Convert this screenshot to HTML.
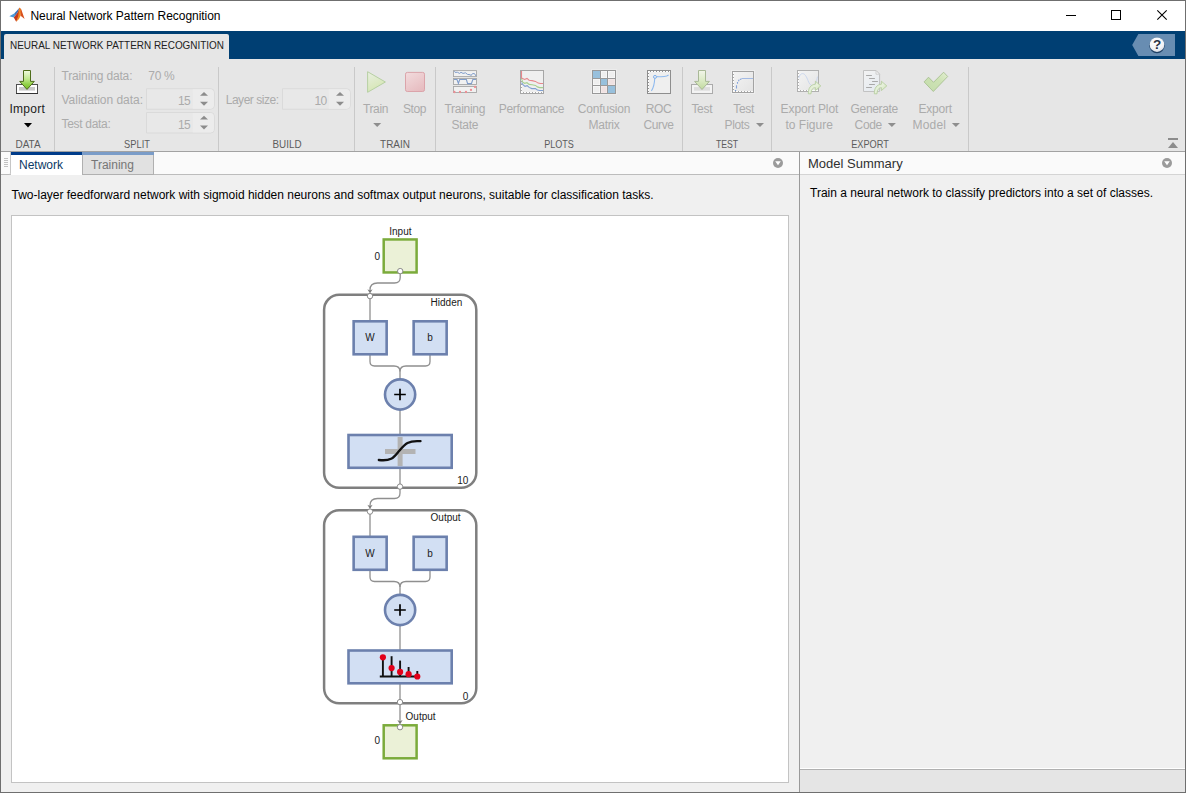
<!DOCTYPE html>
<html>
<head>
<meta charset="utf-8">
<title>Neural Network Pattern Recognition</title>
<style>
html,body{margin:0;padding:0;}
body{width:1186px;height:793px;position:relative;overflow:hidden;background:#f0f0f0;font-family:"Liberation Sans",sans-serif;font-size:12px;color:#000;}
.abs{position:absolute;}
.t{position:absolute;white-space:nowrap;line-height:1;}
.c{position:absolute;white-space:nowrap;line-height:1;transform:translateX(-50%);text-align:center;}
.dis{color:#ababab;}
.sec{color:#5c5c5c;font-size:11px;}
.sep{position:absolute;width:1px;background:#c9c9c9;top:67px;height:84px;}
.spin{position:absolute;height:20px;border:1px solid #dadada;border-radius:4px;background:#e9e9e9;box-sizing:border-box;}
.spin .btn{position:absolute;right:0;top:0;bottom:0;width:20px;background:#e6e6e6;border-radius:0 3px 3px 0;}
</style>
</head>
<body>
<!-- title bar -->
<div class="abs" style="left:0;top:0;width:1186px;height:31px;background:#fff;"></div>
<!-- blue strip -->
<div class="abs" style="left:0;top:31px;width:1186px;height:28px;background:#003f73;"></div>
<!-- toolstrip bg -->
<div class="abs" style="left:0;top:59px;width:1186px;height:92px;background:#e6e6e6;"></div>
<div class="abs" style="left:0;top:151px;width:1186px;height:1px;background:#a2a2a2;"></div>
<!-- toolstrip tab -->
<div class="abs" style="left:4px;top:34px;width:225px;height:25px;background:#e6e6e6;border-radius:2px 2px 0 0;"></div>

<!-- TITLE -->
<div id="title" class="t" style="left:30.4px;top:9.6px;font-size:12px;letter-spacing:-0.04px;color:#000;">Neural Network Pattern Recognition</div>
<div id="tabtxt" class="t" style="left:9.6px;top:39.7px;font-size:11px;transform-origin:0 50%;transform:scaleX(0.9033);color:#222;">NEURAL NETWORK PATTERN RECOGNITION</div>


<!-- ===== TOOLSTRIP CONTENT ===== -->
<svg class="abs" style="left:0;top:0;" width="1186" height="152" viewBox="0 0 1186 152">
<defs>
<linearGradient id="gArrow" x1="0" y1="0" x2="0" y2="1"><stop offset="0" stop-color="#f1fbe2"/><stop offset="0.45" stop-color="#c0e88e"/><stop offset="0.75" stop-color="#8fd043"/><stop offset="1" stop-color="#74bb2a"/></linearGradient>
<linearGradient id="gArrowD" x1="0" y1="0" x2="0" y2="1"><stop offset="0" stop-color="#f2f5ea"/><stop offset="0.5" stop-color="#dcebc6"/><stop offset="1" stop-color="#c0d99e"/></linearGradient>
<linearGradient id="gPlot" x1="0" y1="0" x2="1" y2="1"><stop offset="0" stop-color="#f4f4f4"/><stop offset="1" stop-color="#e3e3e3"/></linearGradient>
<radialGradient id="gHelp" cx="0.45" cy="0.3" r="0.85"><stop offset="0" stop-color="#ffffff"/><stop offset="0.6" stop-color="#f2f3f6"/><stop offset="1" stop-color="#c3c9d4"/></radialGradient>
<linearGradient id="gTrain" x1="0" y1="0" x2="0.4" y2="1"><stop offset="0" stop-color="#e9efe3"/><stop offset="1" stop-color="#d5e6b2"/></linearGradient>
<linearGradient id="gStop" x1="0.2" y1="0" x2="0.8" y2="1"><stop offset="0" stop-color="#f1d9db"/><stop offset="1" stop-color="#e6bbbf"/></linearGradient>
<linearGradient id="gExp" x1="0" y1="0" x2="1" y2="1"><stop offset="0" stop-color="#dfebd0"/><stop offset="0.5" stop-color="#e6f0da"/><stop offset="1" stop-color="#c3dba6"/></linearGradient>
<linearGradient id="gDoc" x1="0" y1="0" x2="0.6" y2="1"><stop offset="0" stop-color="#f3f3f3"/><stop offset="1" stop-color="#e6ebf0"/></linearGradient>
<linearGradient id="gChk" x1="0" y1="1" x2="1" y2="0"><stop offset="0" stop-color="#c3dcab"/><stop offset="0.6" stop-color="#cde2b4"/><stop offset="1" stop-color="#e3eed2"/></linearGradient>
</defs>
<!-- matlab logo -->
<g id="logo">
<path d="M9.3 16.2 L14.2 13.6 L15.6 15.2 L13.8 17.4 Z" fill="#4a9ad8"/>
<path d="M14.2 13.6 L17 10.6 L19.2 8 L18 12 L15.6 15.2 Z" fill="#3c74b8"/>
<path d="M13.8 17.4 L15.6 15.2 L18 12 L19.2 8 L19.9 7.8 L21 10 L19.5 15.5 L16.2 21.8 Z" fill="#c4371c"/>
<path d="M19.3 8 L19.9 7.8 L21.2 9.8 L20.6 15.8 L19 19 L16.2 21.8 L18.2 16 Z" fill="#f08a22"/>
<path d="M20.6 9 L21.3 9.6 L24.6 19 L22.5 17.2 L20.6 15.8 Z" fill="#d8501e"/>
</g>
<!-- window controls -->
<rect x="1066" y="15" width="10" height="1" fill="#000"/>
<rect x="1111.5" y="10.5" width="9" height="9" fill="none" stroke="#000" stroke-width="1"/>
<path d="M1157.3 10.3 L1166.7 19.7 M1166.7 10.3 L1157.3 19.7" stroke="#000" stroke-width="1.1" fill="none"/>
<!-- help tag -->
<path d="M1132.2 45 L1138.4 34 L1175 34 L1175 56 L1138.4 56 Z" fill="#688db2"/>
<circle cx="1157" cy="45.5" r="7.7" fill="#1f4166"/>
<circle cx="1157" cy="44.7" r="7.3" fill="url(#gHelp)"/>
<text x="1157.1" y="49.2" font-family="Liberation Sans, sans-serif" font-size="13.5" font-weight="bold" text-anchor="middle" fill="#273244">?</text>
<!-- collapse icon -->
<rect x="1168" y="138" width="10" height="2" fill="#8c8c8c"/>
<path d="M1168 148 L1173 142 L1178 148 Z" fill="#8c8c8c"/>

<!-- Import icon -->
<rect x="16.5" y="84.5" width="21" height="9" fill="#fff" stroke="#505050"/>
<path d="M16 93.5 H38" stroke="#333" stroke-width="1"/>
<rect x="19" y="87" width="16" height="3.6" fill="#c9c9c9"/>
<path d="M23.5 70.5 H30.5 V81.4 H34.3 L27 89.4 L19.7 81.4 H23.5 Z" fill="url(#gArrow)" stroke="#4e6d1b" stroke-width="1" stroke-linejoin="miter"/>
<path d="M24.6 71.6 H29.4 V79" stroke="#f4fce8" stroke-width="0" fill="none"/>
<path d="M24 123 L32 123 L28 127.4 Z" fill="#000"/>

<!-- Train icon -->
<path d="M367.6 71.7 L367.6 92.3 L385.4 82 Z" fill="url(#gTrain)" stroke="#b7d0a3" stroke-width="1" stroke-linejoin="round"/>
<path d="M373.2 122.9 L381.2 122.9 L377.2 127 Z" fill="#8e8e8e"/>
<!-- Stop icon -->
<rect x="405.5" y="72.4" width="19" height="19.1" rx="1.8" fill="url(#gStop)" stroke="#dba4aa"/>

<!-- Training State icon -->
<g fill="#f1f1f1" stroke="#a6a6a6" stroke-width="0.9">
<rect x="453.5" y="70.6" width="23" height="6"/>
<rect x="453.5" y="78.5" width="23" height="6"/>
<rect x="453.5" y="86.5" width="23" height="6"/>
</g>
<path d="M454.2 71.2 L455 72.3 L457.5 72.3 L459.5 73.4 L461 72.3 L463 73.4 L465.5 72.8 L467.5 74.4 L470.5 74.8 L471 75.6 L472.5 73.6 L474.5 73.6 L476 76" stroke="#809dcb" stroke-width="1" fill="none"/>
<path d="M454 79.5 L457 79.5 L458.4 83.4 L459.7 79.5 L466.4 79.5 L467.6 83.6 L471.4 83.6 L472.8 79.5 L476 79.5" stroke="#809dcb" stroke-width="1.1" fill="none"/>
<g fill="#ee8e94"><circle cx="454.4" cy="92" r="1.15"/><circle cx="460" cy="92" r="1.15"/><circle cx="466" cy="92" r="1.15"/><circle cx="471" cy="89.9" r="1.15"/><circle cx="475" cy="87" r="1.15"/></g>

<!-- Performance icon -->
<rect x="520.5" y="70.5" width="23" height="23" fill="#efefef" stroke="#a6a6a6" stroke-width="1"/>
<path d="M521.5 71 V93" stroke="#fdfdfd" stroke-width="1"/>
<path d="M521 92.5 H543" stroke="#fdfdfd" stroke-width="1"/>
<path d="M521.5 72 V92" stroke="#a9a9a9" stroke-width="1" stroke-dasharray="1 2"/>
<path d="M523 92.5 H543" stroke="#a9a9a9" stroke-width="1" stroke-dasharray="1 2"/>
<path d="M521.5 71 V78 L522.1 78.2 L524.6 79.5 L527 78.4 L529.1 80.2 L532.1 80.6 L535.5 81.4 L538.2 83.1 L540.5 83.5 L543 83.5" stroke="#e7868c" stroke-width="1.1" fill="none"/>
<path d="M521.5 78.6 L522.7 82.1 L524.6 83.3 L527 82.7 L529.1 84.4 L532.1 84.8 L535.5 85.4 L537.4 86.9 L539.7 87.6 L543 87.6" stroke="#a6d090" stroke-width="1.1" fill="none"/>
<path d="M521.5 82.6 L522.7 84.4 L525 86.3 L527.2 85.7 L529.1 87.4 L531.8 88.6 L535.5 88.6 L537.4 90.1 L539.7 90.5 L543 90.5" stroke="#7f9fd2" stroke-width="1.1" fill="none"/>

<!-- Confusion Matrix icon -->
<rect x="591.5" y="69.5" width="25" height="25" fill="none" stroke="#ececec" stroke-width="1"/>
<rect x="592" y="70" width="24" height="24" fill="#999999"/>
<rect x="593" y="71" width="7" height="7" fill="#98c0dc"/>
<rect x="601" y="71" width="6" height="7" fill="#fafafa"/>
<rect x="601.7" y="71.7" width="4.6" height="5.6" fill="#efefef"/>
<rect x="608" y="71" width="7" height="7" fill="#fafafa"/>
<rect x="608.7" y="71.7" width="5.6" height="5.6" fill="#efefef"/>
<rect x="593" y="79" width="7" height="6" fill="#fafafa"/>
<rect x="593.7" y="79.7" width="5.6" height="4.6" fill="#efefef"/>
<rect x="601" y="79" width="6" height="6" fill="#98c0dc"/>
<rect x="608" y="79" width="7" height="6" fill="#f5eaea"/>
<rect x="608.7" y="79.7" width="5.6" height="4.6" fill="#efe2e2"/>
<rect x="593" y="86" width="7" height="7" fill="#fafafa"/>
<rect x="593.7" y="86.7" width="5.6" height="5.6" fill="#efefef"/>
<rect x="601" y="86" width="6" height="7" fill="#f5eaea"/>
<rect x="601.7" y="86.7" width="4.6" height="5.6" fill="#efe2e2"/>
<rect x="608" y="86" width="7" height="7" fill="#98c0dc"/>

<!-- ROC icon -->
<rect x="647.5" y="70.5" width="23" height="23" fill="#efefef" stroke="#8e8e8e" stroke-width="1"/>
<path d="M648.5 71 V93" stroke="#fdfdfd" stroke-width="1"/>
<path d="M648 71.5 H670" stroke="#fdfdfd" stroke-width="1"/>
<path d="M648.5 73 V93" stroke="#929292" stroke-width="1" stroke-dasharray="1 2"/>
<path d="M650 71.5 H670" stroke="#929292" stroke-width="1" stroke-dasharray="1 2"/>
<path d="M651.4 91 C653.4 88 654.5 84 654.7 78.6" stroke="#8fbaee" stroke-width="1.1" fill="none"/>
<circle cx="655" cy="76.9" r="1.5" fill="none" stroke="#7fb0ec" stroke-width="1"/>
<path d="M656.6 76.6 C660 76.9 664 77 666.7 76.1 L668.6 75.1" stroke="#8fbaee" stroke-width="1.1" fill="none"/>

<!-- Test icon -->
<rect x="691.5" y="84.5" width="21" height="9" fill="#f3f3f3" stroke="#ababab"/>
<rect x="694" y="87.1" width="16" height="3.6" fill="#dddddd"/>
<path d="M698.5 70.5 H705.5 V81.4 H709.4 L702 89.5 L694.6 81.4 H698.5 Z" fill="url(#gArrowD)" stroke="#a9b997" stroke-width="1"/>

<!-- Test Plots icon -->
<rect x="731.5" y="70.5" width="23" height="23" fill="none" stroke="#eeeeee" stroke-width="1"/>
<rect x="732.5" y="71.5" width="21" height="21" fill="url(#gPlot)" stroke="#a3a3a3" stroke-width="1"/>
<path d="M733.5 72 V92" stroke="#fdfdfd" stroke-width="1"/>
<path d="M733 91.5 H753" stroke="#fdfdfd" stroke-width="1"/>
<path d="M733.5 74 V91" stroke="#a8a8a8" stroke-width="1" stroke-dasharray="1 2"/>
<path d="M735 91.5 H752" stroke="#a8a8a8" stroke-width="1" stroke-dasharray="1 2"/>
<path d="M735.6 91 L735.6 90" stroke="#6f93d2" stroke-width="1.1" fill="none"/>
<path d="M736.5 88.6 V85.2 M737.5 83.8 V82 M738.5 81.2 L739 79.8 M739.8 79.6 L741.4 78.9" stroke="#86a4da" stroke-width="1.1" fill="none"/>
<path d="M741.4 78.5 L753 78.5" stroke="#a3bae4" stroke-width="1" fill="none"/>
<path d="M756 122.9 L764 122.9 L760 127 Z" fill="#8e8e8e"/>

<!-- Export Plot icon -->
<rect x="797.5" y="70.5" width="21" height="21" fill="url(#gPlot)" stroke="#b0b0b0" stroke-width="1"/>
<path d="M798.5 71 V91" stroke="#fdfdfd" stroke-width="1"/>
<path d="M798 90.5 H818" stroke="#fdfdfd" stroke-width="1"/>
<path d="M798.5 73 V90" stroke="#b0b0b0" stroke-width="1" stroke-dasharray="1 2"/>
<path d="M800 90.5 H810" stroke="#b0b0b0" stroke-width="1" stroke-dasharray="1 2"/>
<path d="M798.6 78 C799.6 75 801 73.6 802.6 73.6 C805 73.6 806.6 77 808 80.5 C809.4 84 810.6 85.6 812.4 85.6 C815 85.6 816.6 82 817.5 76.6" stroke="#cbd7ee" stroke-width="1" fill="none"/>
<path d="M808.3 93.8 C808.2 88 810.8 84.6 815.4 84.2 L815.4 81.2 L820.8 85.9 L815.4 90.6 L815.4 87.6 C812.6 87.7 811.1 89.8 811 93.8 Z" fill="url(#gExp)" stroke="#b3cc9a" stroke-width="0.8"/>

<!-- Generate Code icon -->
<path d="M863.5 70.5 H876 L879.6 74.2 V91.5 H863.5 Z" fill="url(#gDoc)" stroke="#c2c2c2" stroke-width="1"/>
<path d="M876 70.5 V74.2 H879.6 Z" fill="#f6f6f6" stroke="#c6c6c6" stroke-width="0.8"/>
<path d="M866.1 75.5 H871.9 M869.1 78.5 H874.9 M872.1 81.5 H877.9 M869.1 84.5 H874.9 M866.1 87.5 H871.9" stroke="#a9a9a9" stroke-width="1"/>
<path d="M874.3 93.8 C874.2 88 876.8 84.6 881.4 84.2 L881.4 81.2 L886.8 85.9 L881.4 90.6 L881.4 87.6 C878.6 87.7 877.1 89.8 877 93.8 Z" fill="url(#gExp)" stroke="#b3cc9a" stroke-width="0.8"/>
<path d="M887.9 122.9 L895.9 122.9 L891.9 127 Z" fill="#8e8e8e"/>

<!-- Export Model icon -->
<path d="M924.1 81.9 L928.5 77.2 L933.5 82.3 L943.6 72.2 L947.7 76.5 L933.3 91.5 Z" fill="url(#gChk)" stroke="#a2bd8a" stroke-width="0.8" stroke-linejoin="round"/>
<path d="M951.9 122.9 L959.9 122.9 L955.9 127 Z" fill="#8e8e8e"/>

<!-- spinners -->
<path d="M146.5 88.7 H210.4 Q214.4 88.7 214.4 92.7 V105.2 Q214.4 109.2 210.4 109.2 H146.5 Z" fill="#e8e8e8" stroke="#dadada" stroke-width="1"/>
<path d="M192.8 89.2 H210.4 Q213.9 89.2 213.9 92.7 V105.2 Q213.9 108.7 210.4 108.7 H192.8 Z" fill="#ececec"/>
<path d="M200 95.8 L208 95.8 L204 91.9 Z" fill="#8c8c8c"/>
<path d="M200 101.8 L208 101.8 L204 105.7 Z" fill="#8c8c8c"/>
<path d="M146.5 112.5 H210.4 Q214.4 112.5 214.4 116.5 V129 Q214.4 133 210.4 133 H146.5 Z" fill="#e8e8e8" stroke="#dadada" stroke-width="1"/>
<path d="M192.8 113 H210.4 Q213.9 113 213.9 116.5 V129 Q213.9 132.5 210.4 132.5 H192.8 Z" fill="#ececec"/>
<path d="M200 119.6 L208 119.6 L204 115.7 Z" fill="#8c8c8c"/>
<path d="M200 125.6 L208 125.6 L204 129.5 Z" fill="#8c8c8c"/>
<path d="M282.5 88.7 H346.40000000000003 Q350.40000000000003 88.7 350.40000000000003 92.7 V105.2 Q350.40000000000003 109.2 346.40000000000003 109.2 H282.5 Z" fill="#e8e8e8" stroke="#dadada" stroke-width="1"/>
<path d="M328.8 89.2 H346.40000000000003 Q349.90000000000003 89.2 349.90000000000003 92.7 V105.2 Q349.90000000000003 108.7 346.40000000000003 108.7 H328.8 Z" fill="#ececec"/>
<path d="M336 95.8 L344 95.8 L340 91.9 Z" fill="#8c8c8c"/>
<path d="M336 101.8 L344 101.8 L340 105.7 Z" fill="#8c8c8c"/>
</svg>

<!-- separators -->
<div class="sep" style="left:54px;"></div>
<div class="sep" style="left:218px;"></div>
<div class="sep" style="left:354px;"></div>
<div class="sep" style="left:435px;"></div>
<div class="sep" style="left:682px;"></div>
<div class="sep" style="left:771px;"></div>
<div class="sep" style="left:968px;"></div>



<!-- toolstrip text -->
<div class="c" style="left:27.3px;top:103px;font-size:12px;letter-spacing:0.25px;color:#222;">Import</div>
<div class="c sec" style="left:27.75px;top:139px;transform:translateX(-50%) scaleX(0.906);">DATA</div>
<div class="t dis" style="left:61.5px;top:70px;letter-spacing:-0.15px;">Training data:</div>
<div class="t dis" style="left:61.5px;top:94px;letter-spacing:-0.02px;">Validation data:</div>
<div class="t dis" style="left:61.5px;top:118px;letter-spacing:-0.3px;">Test data:</div>
<div class="t dis" style="left:148.3px;top:70px;letter-spacing:-0.3px;">70 %</div>
<div class="t dis" style="left:170px;top:95px;width:20.3px;text-align:right;letter-spacing:-0.5px;">15</div>
<div class="t dis" style="left:170px;top:119px;width:20.3px;text-align:right;letter-spacing:-0.5px;">15</div>
<div class="c sec" style="left:136.5px;top:139px;transform:translateX(-50%) scaleX(0.843);">SPLIT</div>
<div class="t dis" style="left:225.7px;top:94px;letter-spacing:-0.46px;">Layer size:</div>
<div class="t dis" style="left:306px;top:95px;width:20.8px;text-align:right;letter-spacing:-0.5px;">10</div>
<div class="c sec" style="left:286.7px;top:139px;transform:translateX(-50%) scaleX(0.895);">BUILD</div>
<div class="c dis" style="left:375.5px;top:103px;letter-spacing:-0.38px;">Train</div>
<div class="c dis" style="left:414.5px;top:103px;letter-spacing:-0.42px;">Stop</div>
<div class="c sec" style="left:395px;top:139px;transform:translateX(-50%) scaleX(0.906);">TRAIN</div>
<div class="c dis" style="left:464.8px;top:103px;letter-spacing:-0.3px;">Training</div>
<div class="c dis" style="left:464.8px;top:119px;letter-spacing:-0.3px;">State</div>
<div class="c dis" style="left:531.5px;top:103px;letter-spacing:-0.3px;">Performance</div>
<div class="c dis" style="left:604px;top:103px;letter-spacing:-0.16px;">Confusion</div>
<div class="c dis" style="left:604px;top:119px;letter-spacing:-0.3px;">Matrix</div>
<div class="c dis" style="left:658.5px;top:103px;letter-spacing:-0.4px;">ROC</div>
<div class="c dis" style="left:658.5px;top:119px;letter-spacing:-0.4px;">Curve</div>
<div class="c sec" style="left:559.2px;top:139px;transform:translateX(-50%) scaleX(0.823);">PLOTS</div>
<div class="c dis" style="left:701.8px;top:103px;letter-spacing:-0.3px;">Test</div>
<div class="c dis" style="left:743.6px;top:103px;letter-spacing:-0.3px;">Test</div>
<div class="t dis" style="left:724.5px;top:119px;letter-spacing:-0.34px;">Plots</div>
<div class="c sec" style="left:727.1px;top:139px;transform:translateX(-50%) scaleX(0.790);">TEST</div>
<div class="c dis" style="left:809.4px;top:103px;letter-spacing:-0.1px;">Export Plot</div>
<div class="c dis" style="left:809.2px;top:119px;letter-spacing:0px;">to Figure</div>
<div class="c dis" style="left:874.2px;top:103px;letter-spacing:-0.35px;">Generate</div>
<div class="t dis" style="left:854.6px;top:119px;letter-spacing:-0.35px;">Code</div>
<div class="c dis" style="left:935.2px;top:103px;letter-spacing:-0.18px;">Export</div>
<div class="t dis" style="left:912.5px;top:119px;letter-spacing:0.2px;">Model</div>
<div class="c sec" style="left:870.2px;top:139px;transform:translateX(-50%) scaleX(0.836);">EXPORT</div>

<!-- doc tab bar -->
<div class="abs" style="left:1px;top:152px;width:798px;height:22px;background:#fafafa;"></div>
<div class="abs" style="left:1px;top:174px;width:798px;height:1px;background:#bcbcbc;"></div>
<div class="abs" style="left:1px;top:152px;width:10px;height:23px;background:#fbfbfb;border-right:1px solid #c6c6c6;border-bottom:1px solid #bcbcbc;border-radius:0 0 2px 0;box-sizing:border-box;"></div>

<!-- right panel header -->
<div class="abs" style="left:800px;top:152px;width:385px;height:22px;background:#fafafa;"></div>
<div class="abs" style="left:800px;top:174px;width:385px;height:1px;background:#d4d4d4;"></div>
<!-- divider -->
<div class="abs" style="left:799px;top:152px;width:1px;height:640px;background:#9a9a9a;"></div>

<!-- canvas box -->
<div class="abs" style="left:11px;top:215px;width:778px;height:568px;background:#fff;border:1px solid #c3c3c3;box-sizing:border-box;"></div>


<!-- doc tabs -->
<div class="abs" style="left:11px;top:152px;width:71px;height:23px;background:#fff;"></div>
<div class="abs" style="left:11px;top:152px;width:71px;height:3px;background:#003c8a;"></div>
<div class="abs" style="left:82px;top:152px;width:72px;height:23px;background:#e1e1e1;border:1px solid #b0b0b0;border-top:none;box-sizing:border-box;"></div>
<div class="abs" style="left:82px;top:152px;width:72px;height:3px;background:#7a9cc8;"></div>
<div class="t" style="left:19px;top:158.5px;font-size:12px;color:#0b3a66;">Network</div>
<div class="t" style="left:91px;top:158.5px;font-size:12px;color:#767676;">Training</div>
<!-- grip -->
<div class="abs" style="left:4px;top:158px;width:4px;height:1px;background:#c2c2c2;box-shadow:0 2px 0 #c2c2c2,0 4px 0 #c2c2c2,0 6px 0 #c2c2c2,0 8px 0 #c2c2c2;"></div>

<div class="t" style="left:11.5px;top:188.5px;font-size:12px;letter-spacing:-0.008px;color:#000;">Two-layer feedforward network with sigmoid hidden neurons and softmax output neurons, suitable for classification tasks.</div>

<div class="t" style="left:808px;top:156.5px;font-size:13px;color:#303030;">Model Summary</div>
<div class="t" style="left:810px;top:186.5px;font-size:12px;color:#000;">Train a neural network to classify predictors into a set of classes.</div>

<svg class="abs" style="left:0;top:152px;" width="1186" height="641" viewBox="0 152 1186 641">
<!-- dropdown circles -->
<circle cx="778" cy="163" r="5" fill="#9b9b9b"/>
<path d="M775.2 161.3 L780.8 161.3 L778 165.3 Z" fill="#fff"/>
<circle cx="1167" cy="163" r="5" fill="#9b9b9b"/>
<path d="M1164.2 161.3 L1169.8 161.3 L1167 165.3 Z" fill="#fff"/>
<!-- status icon -->
<path d="M1169 776 L1174.5 781 L1169 786 Z" fill="#9a9a9a"/>
<rect x="1176.5" y="776" width="2" height="10" fill="#9a9a9a"/>
</svg>

<!-- ===== NETWORK DIAGRAM ===== -->
<svg class="abs" style="left:0;top:216px;" width="800" height="566" viewBox="0 216 800 566">
<rect x="383.7" y="239.45" width="32.9" height="33" fill="#ebf1d7" stroke="#7bab3b" stroke-width="2.5"/>
<rect x="383.7" y="725.3" width="32.9" height="33" fill="#ebf1d7" stroke="#7bab3b" stroke-width="2.5"/>
<g fill="none" stroke="#8f8f8f" stroke-width="1.3">
<path d="M400.2 273.5 V277.5 Q400.2 283 394.5 283 H377.5 Q370 283 370 290 V291"/>
<path d="M400 489 V493 Q400 498.5 394.5 498.5 H377.5 Q370 498.5 370 505.5 V506.5"/>
<path d="M400 705 V722"/>
</g>
<g fill="#7a7a7a">
<path d="M367.4 289.3 L370 290.6 L372.6 289.3 L370 293.6 Z"/>
<path d="M367.4 504.8 L370 506.1 L372.6 504.8 L370 509.1 Z"/>
<path d="M397.4 720 L400 721.3 L402.6 720 L400 724.6 Z"/>
</g>
<g transform="translate(0,0)">
<rect x="324.1" y="294.85" width="152.2" height="192.9" rx="15" ry="15" fill="none" stroke="#7f7f7f" stroke-width="2.5"/>
<g fill="none" stroke="#8f8f8f" stroke-width="1.3">
<path d="M370 298.5 V321"/>
<path d="M370 354.5 V361.5 Q370 366 374.5 366 H394 Q400 366 400 371.5 V379"/>
<path d="M430 354.5 V361.5 Q430 366 425.5 366 H406 Q400 366 400 371.5"/>
<path d="M400 410 V435"/>
<path d="M400 468.5 V484"/>
</g>
<g fill="#d2dff3" stroke="#6c80ad" stroke-width="2.6">
<rect x="353.65" y="321.3" width="33" height="33"/>
<rect x="413.65" y="321.3" width="33" height="33"/>
<circle cx="400.1" cy="394.5" r="15.1"/>
<rect x="348.5" y="435" width="103.2" height="32.8"/>
</g>
<path d="M394.2 394.5 H405.8 M400 388.7 V400.3" stroke="#000" stroke-width="1.7" fill="none"/>
<rect x="385" y="449" width="30.5" height="5" fill="#b3b3b3"/>
<rect x="397.6" y="437" width="5" height="29" fill="#b3b3b3"/>
<path d="M378.8 460 C392 461.5 394 457 399.5 450.5 C405 444 408 440.2 420.5 441.2" fill="none" stroke="#111" stroke-width="2.3" stroke-linecap="round"/>
<g fill="#fff" stroke="#8a8a8a" stroke-width="1">
<circle cx="370" cy="296.1" r="2.7"/>
<circle cx="400" cy="486.6" r="2.7"/>
</g>
<g font-family="Liberation Sans, sans-serif" font-size="10" fill="#1a1a1a">
<text x="370" y="341" text-anchor="middle">W</text>
<text x="430" y="341" text-anchor="middle">b</text>
<text x="462.3" y="306.4" text-anchor="end">Hidden</text>
<text x="468.3" y="484.3" text-anchor="end">10</text>
</g>
</g>
<g transform="translate(0,215.5)">
<rect x="324.1" y="294.85" width="152.2" height="192.9" rx="15" ry="15" fill="none" stroke="#7f7f7f" stroke-width="2.5"/>
<g fill="none" stroke="#8f8f8f" stroke-width="1.3">
<path d="M370 298.5 V321"/>
<path d="M370 354.5 V361.5 Q370 366 374.5 366 H394 Q400 366 400 371.5 V379"/>
<path d="M430 354.5 V361.5 Q430 366 425.5 366 H406 Q400 366 400 371.5"/>
<path d="M400 410 V435"/>
<path d="M400 468.5 V484"/>
</g>
<g fill="#d2dff3" stroke="#6c80ad" stroke-width="2.6">
<rect x="353.65" y="321.3" width="33" height="33"/>
<rect x="413.65" y="321.3" width="33" height="33"/>
<circle cx="400.1" cy="394.5" r="15.1"/>
<rect x="348.5" y="435" width="103.2" height="32.8"/>
</g>
<path d="M394.2 394.5 H405.8 M400 388.7 V400.3" stroke="#000" stroke-width="1.7" fill="none"/>
<path d="M379.8 461.0 H418" stroke="#111" stroke-width="2" fill="none"/>
<path d="M382.9 442.0 V461.0" stroke="#111" stroke-width="1.9" fill="none"/>
<path d="M391.6 440.70000000000005 V461.0" stroke="#111" stroke-width="1.9" fill="none"/>
<path d="M400.1 445.1 V461.0" stroke="#111" stroke-width="1.9" fill="none"/>
<path d="M408.6 451.5 V461.0" stroke="#111" stroke-width="1.9" fill="none"/>
<path d="M417.3 455.5 V461.0" stroke="#111" stroke-width="1.9" fill="none"/>
<circle cx="382.9" cy="441.8" r="3.1" fill="#e2001a"/>
<circle cx="391.6" cy="452.6" r="3.1" fill="#e2001a"/>
<circle cx="400.1" cy="456.4" r="3.1" fill="#e2001a"/>
<circle cx="408.6" cy="458.7" r="3.1" fill="#e2001a"/>
<circle cx="417.3" cy="461.0" r="3.1" fill="#e2001a"/>
<g fill="#fff" stroke="#8a8a8a" stroke-width="1">
<circle cx="370" cy="296.1" r="2.7"/>
<circle cx="400" cy="486.6" r="2.7"/>
</g>
<g font-family="Liberation Sans, sans-serif" font-size="10" fill="#1a1a1a">
<text x="370" y="341" text-anchor="middle">W</text>
<text x="430" y="341" text-anchor="middle">b</text>
<text x="460.6" y="305.2" text-anchor="end">Output</text>
<text x="468.3" y="484.3" text-anchor="end">0</text>
</g>
</g>
<g fill="#fff" stroke="#8a8a8a" stroke-width="1">
<circle cx="400.2" cy="271.1" r="2.7"/>
<circle cx="400" cy="727.2" r="2.7"/>
</g>
<g font-family="Liberation Sans, sans-serif" font-size="10" fill="#1a1a1a">
<text x="400.4" y="234.5" text-anchor="middle">Input</text>
<text x="377.4" y="260" text-anchor="middle">0</text>
<text x="405.6" y="720.4" text-anchor="start">Output</text>
<text x="377.3" y="743.6" text-anchor="middle">0</text>
</g>
</svg>

<!-- status bar right -->
<div class="abs" style="left:800px;top:768px;width:385px;height:1px;background:#fff;"></div>
<div class="abs" style="left:800px;top:769px;width:385px;height:1px;background:#b0b0b0;"></div>
<div class="abs" style="left:800px;top:770px;width:385px;height:22px;background:#e5e5e5;"></div>

<!-- window borders -->
<div class="abs" style="left:0;top:0;width:1186px;height:1px;background:#6f6f6f;"></div>
<div class="abs" style="left:0;top:0;width:1px;height:793px;background:#6f6f6f;"></div>
<div class="abs" style="left:1185px;top:0;width:1px;height:793px;background:#6f6f6f;"></div>
<div class="abs" style="left:0;top:792px;width:1186px;height:1px;background:#6f6f6f;"></div>
</body>
</html>
